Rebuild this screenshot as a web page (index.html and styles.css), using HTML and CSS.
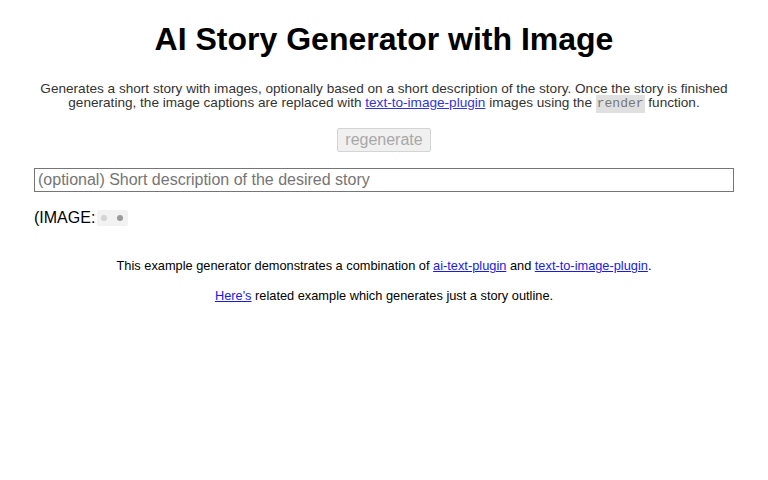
FILE: index.html
```html
<!DOCTYPE html>
<html>
<head>
<meta charset="utf-8">
<link rel="stylesheet" href="styles.css">
</head>
<body>
<main class="page">
  <h1 class="title">AI Story Generator with Image</h1>
  <p class="desc">Generates a short story with images, optionally based on a short description of the story. Once the story is finished generating, the image captions are replaced with <a href="#">text-to-image-plugin</a> images using the <code class="code">render</code> function.</p>
  <div class="actions"><button class="btn" disabled>regenerate</button></div>
  <input class="input" type="text" placeholder="(optional) Short description of the desired story">
  <div class="story">(IMAGE:<span class="loader"><span class="dot dot-a"></span><span class="dot dot-b"></span></span></div>
  <p class="note">This example generator demonstrates a combination of <a href="#">ai-text-plugin</a> and <a href="#">text-to-image-plugin</a>.</p>
  <p class="note">
<a href="#">Here's</a> related example which generates just a story outline.</p>
</main>
</body>
</html>
```
FILE: styles.css
```css
html, body { margin: 0; padding: 0; background: #fff; }
body { font-family: "Liberation Sans", Arial, sans-serif; color: #000; }
.page { width: 700px; margin: 0 auto; display: flex; flex-direction: column; }
.title { font-size: 32px; font-weight: bold; text-align: center; margin: 21px 0 0; line-height: 37px; }
.desc { font-size: 13.6px; line-height: 14px; color: #333; text-align: center; margin: 24px 0 0; }
.desc a { color: #3333dd; }
.note a { color: #1a1ae6; }
.code { font-family: "Liberation Mono", monospace; font-size: 13px; background: #e0e0e0; color: #777; padding: 1px 1px 2px; }
.actions { display: flex; justify-content: center; margin-top: 17px; }
.btn { font-family: "Liberation Sans", Arial, sans-serif; font-size: 16px; color: #a8a8a8; background: #f0f0f0; border: 1px solid #d4d4d4; border-radius: 2px; padding: 0 7px; height: 24px; line-height: 20px; box-sizing: border-box; }
.input { margin-top: 16px; width: 700px; box-sizing: border-box; height: 24px; border: 1px solid #767676; padding: 0 3px; font-family: "Liberation Sans", Arial, sans-serif; font-size: 16px; }
.input::placeholder { color: #757575; }
.story { font-size: 16px; margin-top: 17px; display: flex; align-items: center; height: 18px; }
.loader { display: inline-flex; align-items: center; gap: 10px; background: #f2f2f2; border-radius: 2px; height: 16px; padding: 0 5px 0 4px; margin-left: 2px; }
.dot { width: 6px; height: 6px; border-radius: 50%; }
.dot-a { background: #d4d4d4; }
.dot-b { background: #9a9a9a; }
.note { font-size: 12.8px; line-height: 15px; text-align: center; margin: 0; }
.story + .note { margin-top: 31px; }
.note + .note { margin-top: 15px; }
```
